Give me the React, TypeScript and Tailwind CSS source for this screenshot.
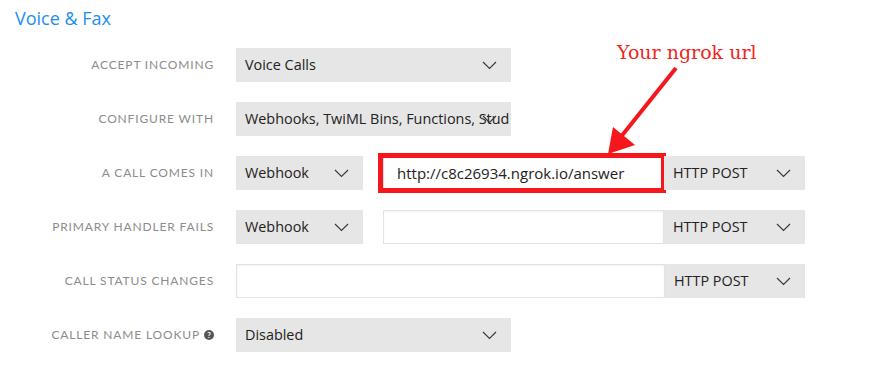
const labelCls =
  "w-[214px] shrink-0 text-right text-[12px] uppercase tracking-[0.07em] text-[#8c8c8c] font-['Lato',sans-serif]";

function Chevron({ className = "" }: { className?: string }) {
  return (
    <svg
      width="15"
      height="9"
      viewBox="0 0 15 9"
      className={className}
      fill="none"
      stroke="#3a3a3a"
      strokeWidth="1.2"
    >
      <path d="M1 1l6.5 6.5L14 1" />
    </svg>
  );
}

function Select({ value, width }: { value: string; width: string }) {
  return (
    <div
      className={`relative h-[34px] ${width} shrink-0 overflow-hidden bg-[#e6e6e6] flex items-center pl-[9px] text-[14.4px] text-[#222] whitespace-nowrap`}
    >
      {value}
      <Chevron className="absolute right-[14px] top-[13px]" />
    </div>
  );
}

function TextInput({ width, value = "" }: { width: string; value?: string }) {
  return (
    <div
      className={`h-[34px] ${width} shrink-0 bg-white border border-[#e3e3e3] shadow-[inset_0_1px_2px_rgba(0,0,0,0.06)] flex items-center pl-[13px] text-[15px] text-[#222] whitespace-nowrap`}
    >
      {value}
    </div>
  );
}

function Row({ label, children }: { label: React.ReactNode; children: React.ReactNode }) {
  return (
    <div className="flex items-center h-[34px] mb-[20px]">
      <div className={labelCls}>{label}</div>
      <div className="flex items-center ml-[22px]">{children}</div>
    </div>
  );
}

export default function App() {
  return (
    <div className="relative w-[883px] h-[373px] bg-white font-['Open_Sans',sans-serif] overflow-hidden">
      <div className="pl-[15px] pt-[6px] leading-6 text-[18px] text-[#1d8ef0]">Voice &amp; Fax</div>

      <div className="mt-[18px]">
        <Row label="Accept Incoming">
          <Select value="Voice Calls" width="w-[275px]" />
        </Row>
        <Row label="Configure With">
          <Select value="Webhooks, TwiML Bins, Functions, Stud" width="w-[275px]" />
        </Row>
        <Row label="A Call Comes In">
          <Select value="Webhook" width="w-[127px]" />
          <div className="relative ml-[20px]">
            <TextInput width="w-[281px]" value="http://c8c26934.ngrok.io/answer" />
            <div className="absolute left-[-5px] top-[-3px] right-[-2px] bottom-[-3px] border-[5px] border-[#f5171b]" />
          </div>
          <Select value="HTTP POST" width="w-[141px]" />
        </Row>
        <Row label="Primary Handler Fails">
          <Select value="Webhook" width="w-[127px]" />
          <div className="ml-[20px]">
            <TextInput width="w-[281px]" />
          </div>
          <Select value="HTTP POST" width="w-[141px]" />
        </Row>
        <Row label="Call Status Changes">
          <TextInput width="w-[429px]" />
          <Select value="HTTP POST" width="w-[140px]" />
        </Row>
        <Row
          label={
            <span className="inline-flex items-center gap-[4px]">
              Caller Name Lookup
              <span className="inline-flex items-center justify-center w-[10px] h-[10px] rounded-full bg-[#555] text-white text-[8px] font-bold leading-none tracking-normal">
                ?
              </span>
            </span>
          }
        >
          <Select value="Disabled" width="w-[275px]" />
        </Row>
      </div>

      <div className="absolute left-[617px] top-[40px] text-[19px] leading-6 text-[#f0261e] font-['DejaVu_Serif',serif] whitespace-nowrap">
        Your ngrok url
      </div>
      <svg className="absolute left-0 top-0" width="883" height="373" viewBox="0 0 883 373">
        <line x1="676" y1="68" x2="620" y2="138" stroke="#f5171b" strokeWidth="4" />
        <polygon points="608,154 613,127 635,145" fill="#f5171b" />
      </svg>
    </div>
  );
}
